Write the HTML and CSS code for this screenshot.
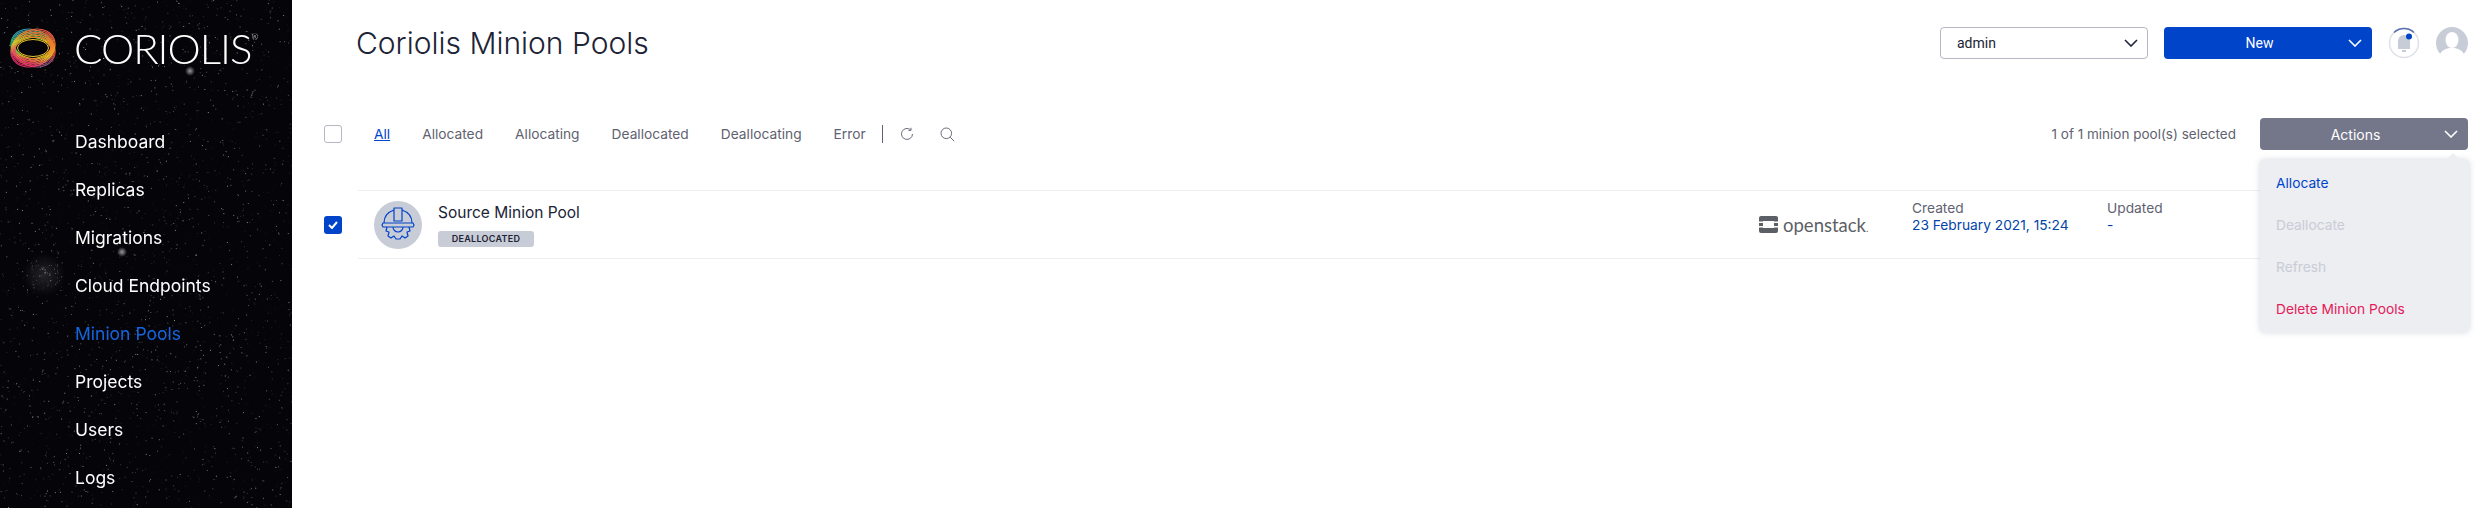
FILE: index.html
```html
<!DOCTYPE html>
<html lang="en">
<head>
    <meta charset="UTF-8">
    <title>Coriolis Minion Pools</title>
    <link rel="stylesheet" href="styles.css">
</head>
<body>
    <div class="sidenav">
        <canvas id="stars" class="stars" width="292" height="508"></canvas>
        <div class="logo">
            <svg class="logo-mark" width="50" height="50" viewBox="0 0 50 50" fill="none">
                <defs>
                    <linearGradient id="ringA" gradientUnits="userSpaceOnUse" x1="6" y1="6" x2="44" y2="46">
                        <stop offset="0" stop-color="#2f7fe0"/>
                        <stop offset="0.3" stop-color="#35c46a"/>
                        <stop offset="0.5" stop-color="#f2d21e"/>
                        <stop offset="0.72" stop-color="#f0503c"/>
                        <stop offset="1" stop-color="#2e56d8"/>
                    </linearGradient>
                    <linearGradient id="ringB" gradientUnits="userSpaceOnUse" x1="46" y1="6" x2="6" y2="44">
                        <stop offset="0" stop-color="#e83a5a"/>
                        <stop offset="0.35" stop-color="#f58a24"/>
                        <stop offset="0.55" stop-color="#e6d020"/>
                        <stop offset="0.8" stop-color="#e8326e"/>
                        <stop offset="1" stop-color="#d8305c"/>
                    </linearGradient>
                </defs>
                <g stroke="url(#ringA)" stroke-width="1">
                    <ellipse cx="25" cy="25" rx="23" ry="18" transform="rotate(26 25 25)"/>
                    <ellipse cx="25" cy="25" rx="22" ry="16.500" transform="rotate(23 25 25)"/>
                    <ellipse cx="25" cy="25" rx="21" ry="15" transform="rotate(20 25 25)"/>
                    <ellipse cx="25" cy="25" rx="20" ry="13.500" transform="rotate(16 25 25)"/>
                    <ellipse cx="25" cy="25" rx="19" ry="12" transform="rotate(12 25 25)"/>
                    <ellipse cx="25" cy="25" rx="18" ry="10.500" transform="rotate(8 25 25)"/>
                </g>
                <g stroke="url(#ringB)" stroke-width="1">
                    <ellipse cx="25" cy="25" rx="23" ry="18" transform="rotate(-26 25 25)"/>
                    <ellipse cx="25" cy="25" rx="22" ry="16.500" transform="rotate(-23 25 25)"/>
                    <ellipse cx="25" cy="25" rx="21" ry="15" transform="rotate(-20 25 25)"/>
                    <ellipse cx="25" cy="25" rx="20" ry="13.500" transform="rotate(-16 25 25)"/>
                    <ellipse cx="25" cy="25" rx="19" ry="12" transform="rotate(-12 25 25)"/>
                    <ellipse cx="25" cy="25" rx="18" ry="10.500" transform="rotate(-8 25 25)"/>
                </g>
                <ellipse cx="25" cy="25" rx="15.500" ry="8.500" fill="#050509" stroke="#e8c92a" stroke-width="1"/>
            </svg>
            <span class="logo-text">CORIOLIS<sup>&reg;</sup></span>
        </div>
        <a href="#">Dashboard</a>
        <a href="#">Replicas</a>
        <a href="#">Migrations</a>
        <a href="#">Cloud Endpoints</a>
        <a href="#" class="active">Minion Pools</a>
        <a href="#">Projects</a>
        <a href="#">Users</a>
        <a href="#">Logs</a>
    </div>

    <div class="main">
        <div class="topbar">
            <h1>Coriolis Minion Pools</h1>
            <div class="select">
                <span>admin</span>
                <svg class="chevron" width="14" height="8" viewBox="0 0 14 8" fill="none"><path d="M1 1l6 6 6-6"/></svg>
            </div>
            <div class="btn btn-new">
                <span>New</span>
                <svg class="chevron" width="14" height="8" viewBox="0 0 14 8" fill="none"><path d="M1 1l6 6 6-6"/></svg>
            </div>
            <svg class="bell" width="32" height="32" viewBox="0 0 32 32" fill="none">
                <circle cx="16" cy="16" r="14.5" stroke="#dfe1e8" stroke-width="1.5"/>
                <path d="M6 5.5A14.5 14.5 0 0 1 26 5.500" stroke="#5a6fb8" stroke-width="1.5"/>
                <path d="M10 22v-8a6 6 0 0 1 12 0v8z" fill="#c8ccd7"/>
                <rect x="14" y="23" width="4" height="2" fill="#c8ccd7"/>
                <circle cx="21" cy="9.5" r="3" fill="#0044ca"/>
            </svg>
            <svg class="avatar" width="32" height="32" viewBox="0 0 32 32">
                <circle cx="16" cy="16" r="16" fill="#c8ccd7"/>
                <ellipse cx="16" cy="13" rx="6.5" ry="8" fill="#fff"/>
                <path d="M4 27c2-4 6-5 9-6h6c3 1 7 2 9 6a16 16 0 0 1-24 0z" fill="#fff"/>
            </svg>
        </div>

        <div class="filters">
            <span class="checkbox"></span>
            <div class="filter-links">
                <a href="#" class="current">All</a>
                <a href="#">Allocated</a>
                <a href="#">Allocating</a>
                <a href="#">Deallocated</a>
                <a href="#">Deallocating</a>
                <a href="#">Error</a>
            </div>
            <span class="sep"></span>
            <svg class="tool" width="14" height="14" viewBox="0 0 14 14" fill="none">
                <path d="M12.5 7a5.5 5.5 0 1 1-2-4.300"/>
                <path d="M11 .8v2.600H8.400"/>
            </svg>
            <svg class="tool tool-search" width="15" height="15" viewBox="0 0 15 15" fill="none">
                <circle cx="6.3" cy="6.3" r="5.3"/>
                <path d="M10.2 10.2l4 4"/>
            </svg>
            <span class="selected-count">1 of 1 minion pool(s) selected</span>
            <div class="actions">
                <div class="btn btn-actions">
                    <span>Actions</span>
                    <svg class="chevron" width="14" height="8" viewBox="0 0 14 8" fill="none"><path d="M1 1l6 6 6-6"/></svg>
                </div>
                <div class="menu">
                    <a href="#" class="menu-blue">Allocate</a>
                    <a href="#" class="menu-off">Deallocate</a>
                    <a href="#" class="menu-off">Refresh</a>
                    <a href="#" class="menu-red">Delete Minion Pools</a>
                </div>
            </div>
        </div>

        <div class="row-wrap">
            <span class="checkbox checked">
                <svg width="10" height="8" viewBox="0 0 10 8" fill="none"><path d="M1 4l3 3 5-6"/></svg>
            </span>
            <div class="row">
                <svg class="pool-icon" width="48" height="48" viewBox="0 0 48 48" fill="none">
                    <circle cx="24" cy="24" r="24" fill="#c8ccd7"/>
                    <g stroke="#0044ca" stroke-width="1.2" stroke-linejoin="round">
                        <path d="M10 22c0-7 4-11 10-13M38 22c0-7-4-11-10-13"/>
                        <rect x="20" y="7" width="8" height="13"/>
                        <path d="M9 22h30l1 2-1 2H9l-1-2z"/>
                        <path d="M13 26l-1 4 3 1-1 4 3 2 3-2 2 3h4l2-3 3 2 3-2-1-4 3-1-1-4"/>
                        <path d="M19 26a5 5 0 0 0 10 0"/>
                    </g>
                </svg>
                <div class="pool-title">
                    <div class="pool-name">Source Minion Pool</div>
                    <div class="badge">DEALLOCATED</div>
                </div>
                <div class="stack-logo">
                    <svg width="19" height="17" viewBox="0 0 19 17">
                        <path d="M2 0h15a2 2 0 0 1 2 2v3.500h-4V5H4v.5H0V2a2 2 0 0 1 2-2zM0 7h4v3H0zM15 7h4v3h-4zM0 11.500h4v.5h11v-.5h4V15a2 2 0 0 1-2 2H2a2 2 0 0 1-2-2z" fill="#5d5f66"/>
                    </svg>
                    <span>openstack<small>.</small></span>
                </div>
                <div class="stamp stamp-created">
                    <div class="stamp-label">Created</div>
                    <div class="stamp-value">23 February 2021, 15:24</div>
                </div>
                <div class="stamp stamp-updated">
                    <div class="stamp-label">Updated</div>
                    <div class="stamp-value">-</div>
                </div>
            </div>
        </div>
    </div>

    <script>
      // star field behind the sidebar, seeded so it comes out the same every time
      var ctx = document.getElementById("stars").getContext("2d");
      var seed = 7;
      function rnd() {
        seed = (seed * 16807) % 2147483647;
        return seed / 2147483647;
      }
      for (var i = 0; i < 2600; i++) {
        var a = rnd();
        ctx.fillStyle = "rgba(255,255,255," + (0.06 + a * a * 0.5) + ")";
        ctx.fillRect(rnd() * 292, rnd() * 508, 1, 1);
      }
      function glow(x, y, r, alpha) {
        var g = ctx.createRadialGradient(x, y, 0, x, y, r);
        g.addColorStop(0, "rgba(190,190,195," + alpha + ")");
        g.addColorStop(1, "rgba(190,190,195,0)");
        ctx.fillStyle = g;
        ctx.fillRect(x - r, y - r, r * 2, r * 2);
      }
      glow(190, 71, 5, 0.8);
      glow(122, 252, 5, 0.8);
      glow(44, 275, 22, 0.16);
      for (var j = 0; j < 50; j++) {
        ctx.fillStyle = "rgba(255,255,255," + (0.1 + rnd() * 0.25) + ")";
        ctx.fillRect(44 + (rnd() - 0.5) * 30, 275 + (rnd() - 0.5) * 22, 1, 1);
      }
    </script>
</body>
</html>
```

FILE: styles.css
```css
* {
  box-sizing: border-box;
}

html,
body {
  margin: 0;
  height: 100%;
}

body {
  display: flex;
  height: 508px;
  overflow: hidden;
  background-color: #fff;
  color: #202336;
  font-family: Inter, Roboto, sans-serif;
  font-size: 13.5px;
}

a {
  text-decoration: none;
  color: inherit;
}

/* sidebar */
.sidenav {
  position: relative;
  width: 292px;
  flex-shrink: 0;
  height: 508px;
  overflow: hidden;
  padding-left: 75px;
  background-color: #050509;
}

.stars {
  position: absolute;
  top: 0;
  left: 0;
}

.logo {
  position: relative;
  display: flex;
  align-items: center;
  height: 96px;
  margin-left: -67px;
  margin-bottom: 22px;
}

.logo-mark {
  flex-shrink: 0;
}

.logo-text {
  margin-left: 16px;
  font-family: Lato, sans-serif;
  font-weight: 300;
  font-size: 42px;
  letter-spacing: -1px;
  line-height: 1;
  color: #fff;
}

.logo-text sup {
  font-size: 8px;
  vertical-align: 24px;
  line-height: 0;
}

.sidenav a {
  position: relative;
  display: block;
  height: 48px;
  line-height: 48px;
  font-size: 17.500px;
  color: #fff;
}

.sidenav a.active {
  color: #1565e0;
}

/* main content */
.main {
  flex: 1;
  min-width: 0;
  padding: 0 24px 0 32px;
}

.topbar {
  display: flex;
  align-items: center;
  height: 59px;
  padding-top: 27px;
  padding-left: 32px;
}

.topbar > * {
  flex-shrink: 0;
}

.topbar h1 {
  margin: 0 auto 0 0;
  font-size: 30px;
  font-weight: 300;
  color: #202336;
}

.chevron path {
  stroke: currentColor;
  stroke-width: 1.6;
}

.select {
  display: flex;
  align-items: center;
  justify-content: space-between;
  width: 208px;
  height: 32px;
  padding: 0 9px 0 16px;
  border: 1px solid #b5b8c2;
  border-radius: 4px;
  font-family: Roboto, sans-serif;
  font-size: 14px;
  color: #202336;
}

.btn {
  position: relative;
  display: flex;
  align-items: center;
  justify-content: center;
  width: 208px;
  height: 32px;
  padding-right: 17px;
  border-radius: 4px;
  color: #fff;
}

.btn .chevron {
  position: absolute;
  right: 10px;
  top: 12px;
}

.btn-new {
  margin-left: 16px;
  background-color: #0044ca;
  font-family: Roboto, sans-serif;
  font-size: 14px;
}

.btn-actions {
  background-color: #74778a;
  font-size: 14px;
}

.bell {
  margin-left: 16px;
}

.avatar {
  margin-left: 16px;
}

.filters {
  display: flex;
  align-items: center;
  height: 32px;
  margin-top: 59px;
}

.checkbox {
  display: flex;
  align-items: center;
  justify-content: center;
  flex-shrink: 0;
  width: 18px;
  height: 18px;
  border: 1px solid #b5b8c2;
  border-radius: 3px;
  background-color: #fff;
}

.checkbox.checked {
  border: 0;
  background-color: #0044ca;
}

.checkbox.checked path {
  stroke: #fff;
  stroke-width: 2;
}

.filter-links {
  display: flex;
  gap: 32px;
  margin-left: 32px;
  color: #5f6270;
  font-size: 13.750px;
}

.filter-links .current {
  color: #0044ca;
  text-decoration: underline;
}

.sep {
  width: 1px;
  height: 18px;
  margin-left: 16px;
  background-color: #5f6270;
}

.tool path,
.tool circle {
  stroke: #6a6d7a;
  stroke-width: 1;
}

.tool {
  margin-left: 17px;
}

.tool-search {
  margin-left: 26px;
}

.selected-count {
  margin-left: auto;
  margin-right: 24px;
  color: #5f6270;
}

.actions {
  position: relative;
  flex-shrink: 0;
}

.menu {
  position: absolute;
  z-index: 1;
  top: 42px;
  left: 0;
  width: 209px;
  padding: 2px 0;
  border-radius: 4px;
  background-color: #eceef1;
  box-shadow: 0 0 6px rgba(160, 165, 180, 0.45);
}

.menu::before {
  content: "";
  position: absolute;
  top: -5px;
  right: 11px;
  width: 10px;
  height: 10px;
  background-color: #eceef1;
  transform: rotate(45deg);
}

.menu a {
  display: block;
  height: 42px;
  line-height: 42px;
  padding-left: 16px;
  font-size: 13.750px;
}

.menu-blue {
  color: #0044ca;
}

.menu-off {
  color: #c8ccd7;
}

.menu-red {
  color: #e6195a;
}

.row-wrap {
  display: flex;
  align-items: center;
  margin-top: 40px;
}

.row {
  display: flex;
  align-items: center;
  flex: 1;
  height: 69px;
  margin-left: 16px;
  padding-left: 16px;
  border-top: 1px solid #eceef1;
  border-bottom: 1px solid #eceef1;
}

.pool-icon {
  flex-shrink: 0;
}

.pool-title {
  margin-left: 16px;
  margin-right: auto;
}

.pool-name {
  font-size: 15.500px;
  line-height: 20px;
}

.badge {
  width: 96px;
  height: 16px;
  margin-top: 8px;
  border-radius: 3px;
  background-color: #c8ccd7;
  text-align: center;
  font-size: 9px;
  font-weight: 600;
  line-height: 16px;
  letter-spacing: 0.3px;
}

.stack-logo {
  display: flex;
  align-items: center;
  gap: 5px;
  width: 153px;
  color: #5d5f66;
  font-family: Lato, sans-serif;
  font-size: 18.500px;
}

.stack-logo small {
  font-size: 10px;
}

.stamp {
  padding-bottom: 15px;
  font-size: 13.750px;
  line-height: 17px;
}

.stamp-label {
  color: #5f6270;
}

.stamp-value {
  color: #0044a8;
}

.stamp-created {
  width: 195px;
}

.stamp-updated {
  width: 361px;
}
```
